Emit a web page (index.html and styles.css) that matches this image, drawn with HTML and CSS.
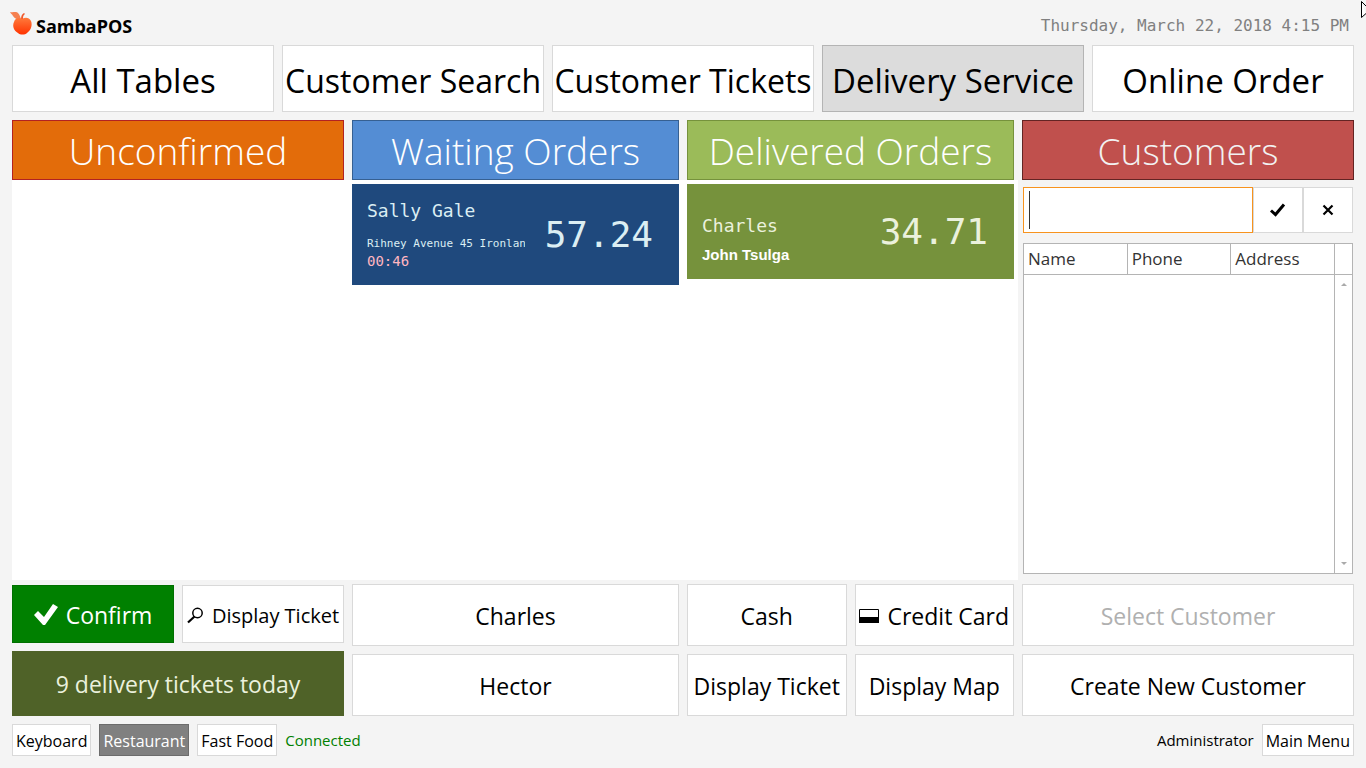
FILE: index.html
```html
<!DOCTYPE html>
<html lang="en">

<head>
  <meta charset="UTF-8" />
  <meta name="viewport" content="width=device-width, initial-scale=1.0" />
  <title>SambaPOS - Delivery Service</title>
  <link rel="stylesheet" href="styles.css">
</head>

<body>

  <header>
    <div class="logo">
      <svg width="24" height="26" viewBox="0 0 24 26" aria-hidden="true">
        <defs>
          <linearGradient id="apple" x1="0" y1="0" x2="0" y2="1">
            <stop offset="0" stop-color="#ff7a3c" />
            <stop offset="1" stop-color="#ff3300" />
          </linearGradient>
        </defs>
        <path d="M0 1c3 1 6-1 8 1 2 2 2 4 3 6-3 1-6 0-8-3C2 3 1 3 0 1z" fill="#f58050" />
        <path d="M11 8C11 5 12 3 14 2l1 1c-2 1-2 3-2 5z" fill="#f0592b" />
        <path d="M12 8c3-2 7-2 9 2 2 5-1 10-4 12-2 2-7 2-9 0-4-2-6-7-4-11 1-4 5-5 8-3z" fill="url(#apple)" />
      </svg>
      <h1>SambaPOS</h1>
    </div>
    <time datetime="2018-03-22T16:15">Thursday, March 22, 2018 4:15 PM</time>
  </header>

  <nav class="screens">
    <button class="btn">All Tables</button>
    <button class="btn long">Customer Search</button>
    <button class="btn long">Customer Tickets</button>
    <button class="btn active">Delivery Service</button>
    <button class="btn">Online Order</button>
  </nav>

  <main>
    <div class="columns">
      <h2 class="heading unconfirmed">Unconfirmed</h2>
      <h2 class="heading waiting">Waiting Orders</h2>
      <h2 class="heading delivered">Delivered Orders</h2>
      <h2 class="heading customers">Customers</h2>
    </div>

    <div class="columns board">
      <section class="tickets">
        <div></div>
        <div>
          <article class="ticket ticket-waiting">
            <div class="ticket-info">
              <div class="ticket-name">Sally Gale</div>
              <div class="ticket-address">Rihney Avenue 45 Ironland</div>
              <div class="ticket-time">00:46</div>
            </div>
            <div class="ticket-total">57.24</div>
          </article>
        </div>
        <div>
          <article class="ticket ticket-delivered">
            <div class="ticket-info">
              <div class="ticket-name">Charles</div>
              <div class="ticket-customer">John Tsulga</div>
            </div>
            <div class="ticket-total">34.71</div>
          </article>
        </div>
      </section>

      <section class="customer-panel">
        <form class="search">
          <input type="text" aria-label="Search customers" />
          <button class="btn" type="button" aria-label="Search">
            <svg width="16" height="14" viewBox="0 0 16 14" aria-hidden="true"><path d="M1 7.500L5.500 11.500L14 1.500" fill="none" stroke="#000" stroke-width="3" /></svg>
          </button>
          <button class="btn" type="button" aria-label="Clear">
            <svg width="12" height="12" viewBox="0 0 12 12" aria-hidden="true"><path d="M1.500 1.500L10.500 10.500M10.500 1.500L1.500 10.500" fill="none" stroke="#000" stroke-width="2.200" /></svg>
          </button>
        </form>
        <div class="customer-list">
          <table>
            <thead>
              <tr>
                <th>Name</th>
                <th>Phone</th>
                <th>Address</th>
                <th class="gutter"></th>
              </tr>
            </thead>
          </table>
          <div class="customer-rows">
            <div class="scrollbar">
              <svg width="8" height="4" viewBox="0 0 8 4" aria-hidden="true"><path d="M1 4L4 1L7 4z" fill="#aaa" /></svg>
              <svg width="8" height="4" viewBox="0 0 8 4" aria-hidden="true"><path d="M1 0L4 3L7 0z" fill="#aaa" /></svg>
            </div>
          </div>
        </div>
      </section>
    </div>

    <div class="columns actions">
      <div class="action-group">
        <div class="confirm-row">
          <button class="btn confirm">
            <svg width="24" height="22" viewBox="0 0 24 22" aria-hidden="true"><path d="M0 11l4-4 6 6L19 0l5 3L11 21H9z" fill="#fff" /></svg>
            Confirm
          </button>
          <button class="btn small">
            <svg width="17" height="17" viewBox="0 0 17 17" aria-hidden="true"><circle cx="10.500" cy="6" r="4.700" fill="none" stroke="#000" stroke-width="1.500" /><path d="M7.500 9.500L1 15.500" stroke="#000" stroke-width="2.200" /></svg>
            Display Ticket
          </button>
        </div>
        <div class="summary">9 delivery tickets today</div>
      </div>
      <div class="action-group even">
        <button class="btn">Charles</button>
        <button class="btn">Hector</button>
      </div>
      <div class="action-group even pairs">
        <button class="btn">Cash</button>
        <button class="btn">
          <svg width="20" height="14" viewBox="0 0 20 14" aria-hidden="true"><path d="M.5.500h19v13H.500z" fill="#fff" stroke="#000" /><path d="M0 8h20v6H0z" /></svg>
          Credit Card
        </button>
        <button class="btn">Display Ticket</button>
        <button class="btn">Display Map</button>
      </div>
      <div class="action-group even">
        <button class="btn" disabled>Select Customer</button>
        <button class="btn">Create New Customer</button>
      </div>
    </div>
  </main>

  <footer>
    <button class="btn">Keyboard</button>
    <button class="btn selected">Restaurant</button>
    <button class="btn">Fast Food</button>
    <span class="status">Connected</span>
    <span class="user">Administrator</span>
    <button class="btn">Main Menu</button>
  </footer>

  <svg class="cursor" width="5" height="18" viewBox="0 0 5 18" aria-hidden="true"><path d="M.5.500V16.500L5 12.500M.5.500L5 5" fill="#fff" stroke="#000" /></svg>

</body>

</html>
```
FILE: styles.css
```css
:root {
  --background: #f4f4f4;
  --border: #d9d9d9;
  --grid-border: #b4b4b4;
  --sans: "Segoe UI", "Open Sans", sans-serif;
  --mono: Consolas, "DejaVu Sans Mono", monospace;
}

* {
  box-sizing: border-box;
}

body {
  margin: 0;
  padding: 0 12px 12px;
  min-height: 100vh;
  display: flex;
  flex-direction: column;
  gap: 8px;
  background-color: var(--background);
  font-family: var(--sans);
  color: #000;
  overflow: hidden;
}

header {
  height: 37px;
  display: flex;
  justify-content: space-between;
  align-items: flex-end;
}

.logo {
  display: flex;
  align-items: flex-end;
  margin-left: -2px;
}

h1 {
  margin: 0 0 0 2px;
  font-size: 18px;
  line-height: 22px;
  font-weight: 700;
}

time {
  padding: 0 5px 1px;
  font-family: var(--mono);
  font-size: 16px;
  line-height: 20px;
  color: #808080;
}

.btn {
  min-width: 0;
  display: flex;
  justify-content: center;
  align-items: center;
  gap: 8px;
  padding: 0;
  border: 1px solid var(--border);
  background-color: #fff;
  font-family: inherit;
  font-size: 23px;
  color: #000;
  white-space: nowrap;
  cursor: pointer;
}

.btn:disabled {
  color: #b0b0b0;
}

.screens {
  display: grid;
  grid-template-columns: repeat(5, 1fr);
  gap: 8px;
}

.screens .btn {
  height: 67px;
  padding-top: 4px;
  font-size: 33px;
}

.screens .long {
  font-size: 32px;
}

.screens .active {
  background-color: #dcdcdc;
  border-color: #b4b4b4;
}

main {
  flex: 1;
  display: flex;
  flex-direction: column;
}

.columns {
  display: grid;
  grid-template-columns: minmax(0, 332fr) minmax(0, 327fr) minmax(0, 327fr) minmax(0, 332fr);
  column-gap: 8px;
}

.heading {
  height: 60px;
  margin: 0;
  border: 1px solid;
  font-size: 37px;
  line-height: 60px;
  font-weight: 300;
  text-align: center;
  white-space: nowrap;
  color: #fff;
}

.unconfirmed {
  background-color: #e36c0a;
  border-color: #b22222;
}

.waiting {
  background-color: #548dd4;
  border-color: #366092;
}

.delivered {
  background-color: #9bbb59;
  border-color: #76923c;
}

.customers {
  background-color: #c0504d;
  border-color: #632423;
  color: #f2f2f2;
}

/* Ticket lists */
.board {
  flex: 1;
}

.tickets {
  grid-column: 1 / 4;
  display: grid;
  grid-template-columns: subgrid;
  margin: 0 -4px 4px 0;
  padding: 4px 4px 0 0;
  background-color: #fff;
}

.ticket {
  display: flex;
  align-items: center;
  gap: 20px;
  padding: 0 26px 0 15px;
  font-family: var(--mono);
}

.ticket-waiting {
  height: 101px;
  background-color: #1f497d;
  color: #dbeef3;
}

.ticket-delivered {
  height: 95px;
  background-color: #76923c;
  color: #ebf1dd;
}

.ticket-info {
  flex: 1;
  min-width: 0;
}

.ticket-name {
  font-size: 18px;
  line-height: 24px;
}

.ticket-address {
  margin-top: 13px;
  overflow: hidden;
  font-size: 11px;
  line-height: 16px;
  white-space: nowrap;
}

.ticket-time {
  font-size: 14px;
  line-height: 18px;
  color: #ffb6c1;
}

.ticket-delivered .ticket-info {
  padding-top: 14px;
}

.ticket-customer {
  margin-top: 8px;
  font-family: Arial, "Liberation Sans", sans-serif;
  font-size: 15px;
  line-height: 18px;
  font-weight: 700;
  color: #fff;
}

.ticket-total {
  font-size: 36px;
  line-height: 42px;
}

/* Customer search */
.customer-panel {
  display: flex;
  flex-direction: column;
  gap: 10px;
  padding: 7px 1px 10px;
}

.search {
  display: flex;
}

.search input {
  flex: 1;
  min-width: 0;
  height: 46px;
  padding: 0 6px;
  border: 1px solid #f7931e;
  border-radius: 0;
  outline: none;
  background: linear-gradient(#333, #333) 5px center / 1px 38px no-repeat #fff;
  font-family: inherit;
  font-size: 23px;
}

.search .btn {
  width: 50px;
}

.customer-list {
  flex: 1;
  display: flex;
  flex-direction: column;
  border: 1px solid var(--grid-border);
  background-color: #fff;
}

table {
  width: 100%;
  table-layout: fixed;
  border-collapse: separate;
  border-spacing: 0;
}

th {
  height: 31px;
  padding: 0 4px;
  border-right: 1px solid var(--grid-border);
  border-bottom: 1px solid var(--grid-border);
  font-size: 17px;
  line-height: 20px;
  font-weight: 400;
  text-align: left;
  color: #333;
}

.gutter {
  width: 17px;
  padding: 0;
  border-right: none;
}

.customer-rows {
  flex: 1;
  display: flex;
  justify-content: flex-end;
}

.scrollbar {
  width: 18px;
  display: flex;
  flex-direction: column;
  justify-content: space-between;
  align-items: center;
  padding: 7px 0;
  border-left: 1px solid var(--grid-border);
}

/* Action buttons */
.action-group {
  display: grid;
  grid-template-rows: 59px 65px;
  gap: 8px;
}

.even {
  grid-template-rows: 62px 62px;
}

.pairs {
  grid-template-columns: 1fr 1fr;
}

.action-group .btn {
  padding-top: 2px;
}

.confirm-row {
  display: grid;
  grid-template-columns: 1fr 1fr;
  gap: 8px;
  padding-top: 1px;
}

.confirm-row .small {
  font-size: 20px;
}

.confirm-row .confirm {
  background-color: #008000;
  border-color: #007000;
  color: #fff;
}

.summary {
  display: flex;
  justify-content: center;
  align-items: center;
  background-color: #4f6228;
  font-size: 23px;
  color: #ebf1dd;
}

footer {
  display: flex;
  align-items: center;
  gap: 8px;
}

footer .btn {
  height: 32px;
  padding: 2px 3px 0;
  font-size: 16px;
}

footer .selected {
  background-color: #808080;
  border-color: #6c6c6c;
  color: #fff;
}

.status {
  font-size: 15px;
  color: #008000;
}

.user {
  margin-left: auto;
  font-size: 15px;
}

/* Mouse pointer at the window edge */
.cursor {
  position: absolute;
  top: 1px;
  right: 0;
}
```
